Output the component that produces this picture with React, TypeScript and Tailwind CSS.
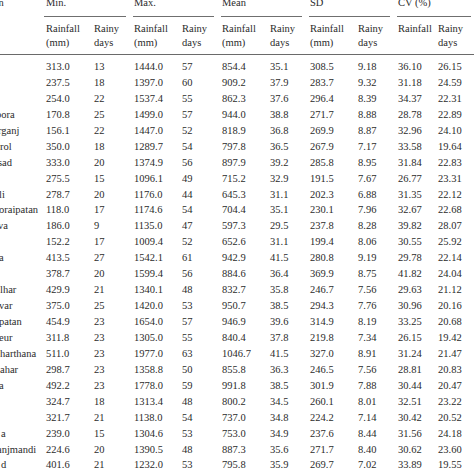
const rows: { name: string; indent: string; v: string[] }[] = [
  { name: "", indent: "", v: ["313.0", "13", "1444.0", "57", "854.4", "35.1", "308.5", "9.18", "36.10", "26.15"] },
  { name: "", indent: "", v: ["237.5", "18", "1397.0", "60", "909.2", "37.9", "283.7", "9.32", "31.18", "24.59"] },
  { name: "", indent: "", v: ["254.0", "22", "1537.4", "55", "862.3", "37.6", "296.4", "8.39", "34.37", "22.31"] },
  { name: "bora", indent: "-ml-[4px]", v: ["170.8", "25", "1499.0", "57", "944.0", "38.8", "271.7", "8.88", "28.78", "22.89"] },
  { name: "rganj", indent: "-ml-[2px]", v: ["156.1", "22", "1447.0", "52", "818.9", "36.8", "269.9", "8.87", "32.96", "24.10"] },
  { name: "rol", indent: "", v: ["350.0", "18", "1289.7", "54", "797.8", "36.5", "267.9", "7.17", "33.58", "19.64"] },
  { name: "sad", indent: "-ml-[2px]", v: ["333.0", "20", "1374.9", "56", "897.9", "39.2", "285.8", "8.95", "31.84", "22.83"] },
  { name: "", indent: "", v: ["275.5", "15", "1096.1", "49", "715.2", "32.9", "191.5", "7.67", "26.77", "23.31"] },
  { name: "li", indent: "-ml-[1px]", v: ["278.7", "20", "1176.0", "44", "645.3", "31.1", "202.3", "6.88", "31.35", "22.12"] },
  { name: "oraipatan", indent: "-ml-[1px]", v: ["118.0", "17", "1174.6", "54", "704.4", "35.1", "230.1", "7.96", "32.67", "22.68"] },
  { name: "va", indent: "-ml-[2px]", v: ["186.0", "9", "1135.0", "47", "597.3", "29.5", "237.8", "8.28", "39.82", "28.07"] },
  { name: "", indent: "", v: ["152.2", "17", "1009.4", "52", "652.6", "31.1", "199.4", "8.06", "30.55", "25.92"] },
  { name: "a", indent: "-ml-[1px]", v: ["413.5", "27", "1542.1", "61", "942.9", "41.5", "280.8", "9.19", "29.78", "22.14"] },
  { name: "", indent: "", v: ["378.7", "20", "1599.4", "56", "884.6", "36.4", "369.9", "8.75", "41.82", "24.04"] },
  { name: "lhar", indent: "", v: ["429.9", "21", "1340.1", "48", "832.7", "35.8", "246.7", "7.56", "29.63", "21.12"] },
  { name: "var", indent: "-ml-[1px]", v: ["375.0", "25", "1420.0", "53", "950.7", "38.5", "294.3", "7.76", "30.96", "20.16"] },
  { name: "patan", indent: "-ml-[1px]", v: ["454.9", "23", "1654.0", "57", "946.9", "39.6", "314.9", "8.19", "33.25", "20.68"] },
  { name: "eur", indent: "-ml-[1px]", v: ["311.8", "23", "1305.0", "55", "840.4", "37.8", "219.8", "7.34", "26.15", "19.42"] },
  { name: "harthana", indent: "", v: ["511.0", "23", "1977.0", "63", "1046.7", "41.5", "327.0", "8.91", "31.24", "21.47"] },
  { name: "ahar", indent: "", v: ["298.7", "23", "1358.8", "50", "855.8", "36.3", "246.5", "7.56", "28.81", "20.83"] },
  { name: "a", indent: "-ml-[1px]", v: ["492.2", "23", "1778.0", "59", "991.8", "38.5", "301.9", "7.88", "30.44", "20.47"] },
  { name: "", indent: "", v: ["324.7", "18", "1313.4", "48", "800.2", "34.5", "260.1", "8.01", "32.51", "23.22"] },
  { name: "", indent: "", v: ["321.7", "21", "1138.0", "54", "737.0", "34.8", "224.2", "7.14", "30.42", "20.52"] },
  { name: "a", indent: "ml-[1px]", v: ["239.0", "15", "1304.6", "53", "753.0", "34.9", "237.6", "8.44", "31.56", "24.18"] },
  { name: "anjmandi", indent: "-ml-[3px]", v: ["224.6", "20", "1390.5", "48", "887.3", "35.6", "271.7", "8.40", "30.62", "23.60"] },
  { name: "d", indent: "ml-[1px]", v: ["401.6", "21", "1232.0", "53", "795.8", "35.9", "269.7", "7.02", "33.89", "19.55"] },
];

const groups = [
  { label: "Min.", line: "-ml-[2px] mr-[8px]" },
  { label: "Max.", line: "-ml-[1px] mr-[8px]" },
  { label: "Mean", line: "-ml-[1px] mr-[8px]" },
  { label: "SD", line: "-ml-[1px] mr-[8px]" },
  { label: "CV (%)", line: "-ml-[1px] mr-[3px]" },
];

const grid =
  "grid grid-cols-[46px_48px_40px_48px_40px_48px_40px_48px_40px_40px_36px]";

export default function App() {
  return (
    <div className="w-[474px] h-[474px] overflow-hidden bg-white text-[#2b2b2b] font-['Liberation_Serif',serif] text-[10.5px]">
      {/* group header */}
      <div className={`${grid} h-[16px]`}>
        <div className="-ml-[26px] -mt-[4px] leading-[14px] whitespace-nowrap">Station</div>
        {groups.map((g) => (
          <div key={g.label} className="col-span-2 flex flex-col">
            <div className="-mt-[4px] h-[20px] leading-[14px] whitespace-nowrap">{g.label}</div>
            <div className={`border-b border-[#6f6f6f] ${g.line}`} />
          </div>
        ))}
      </div>

      {/* sub header */}
      <div className={`${grid} pt-[6px] pb-[4px] border-b-[1.5px] border-[#6a6a6a] leading-[14px]`}>
        <div />
        {groups.map((g, i) => (
          <div key={g.label} className="contents">
            <div className="whitespace-nowrap">
              Rainfall
              <br />
              {i < 4 ? "(mm)" : ""}
            </div>
            <div>
              Rainy
              <br />
              days
            </div>
          </div>
        ))}
      </div>

      {/* body */}
      <div className="pt-[4px]">
        {rows.map((r, i) => (
          <div key={i} className={`${grid} h-[15.95px] leading-[15.95px] whitespace-nowrap`}>
            <div className="overflow-visible">
              <span className={`block ${r.indent}`}>{r.name}</span>
            </div>
            {r.v.map((c, j) => (
              <div key={j}>{c}</div>
            ))}
          </div>
        ))}
      </div>
    </div>
  );
}
